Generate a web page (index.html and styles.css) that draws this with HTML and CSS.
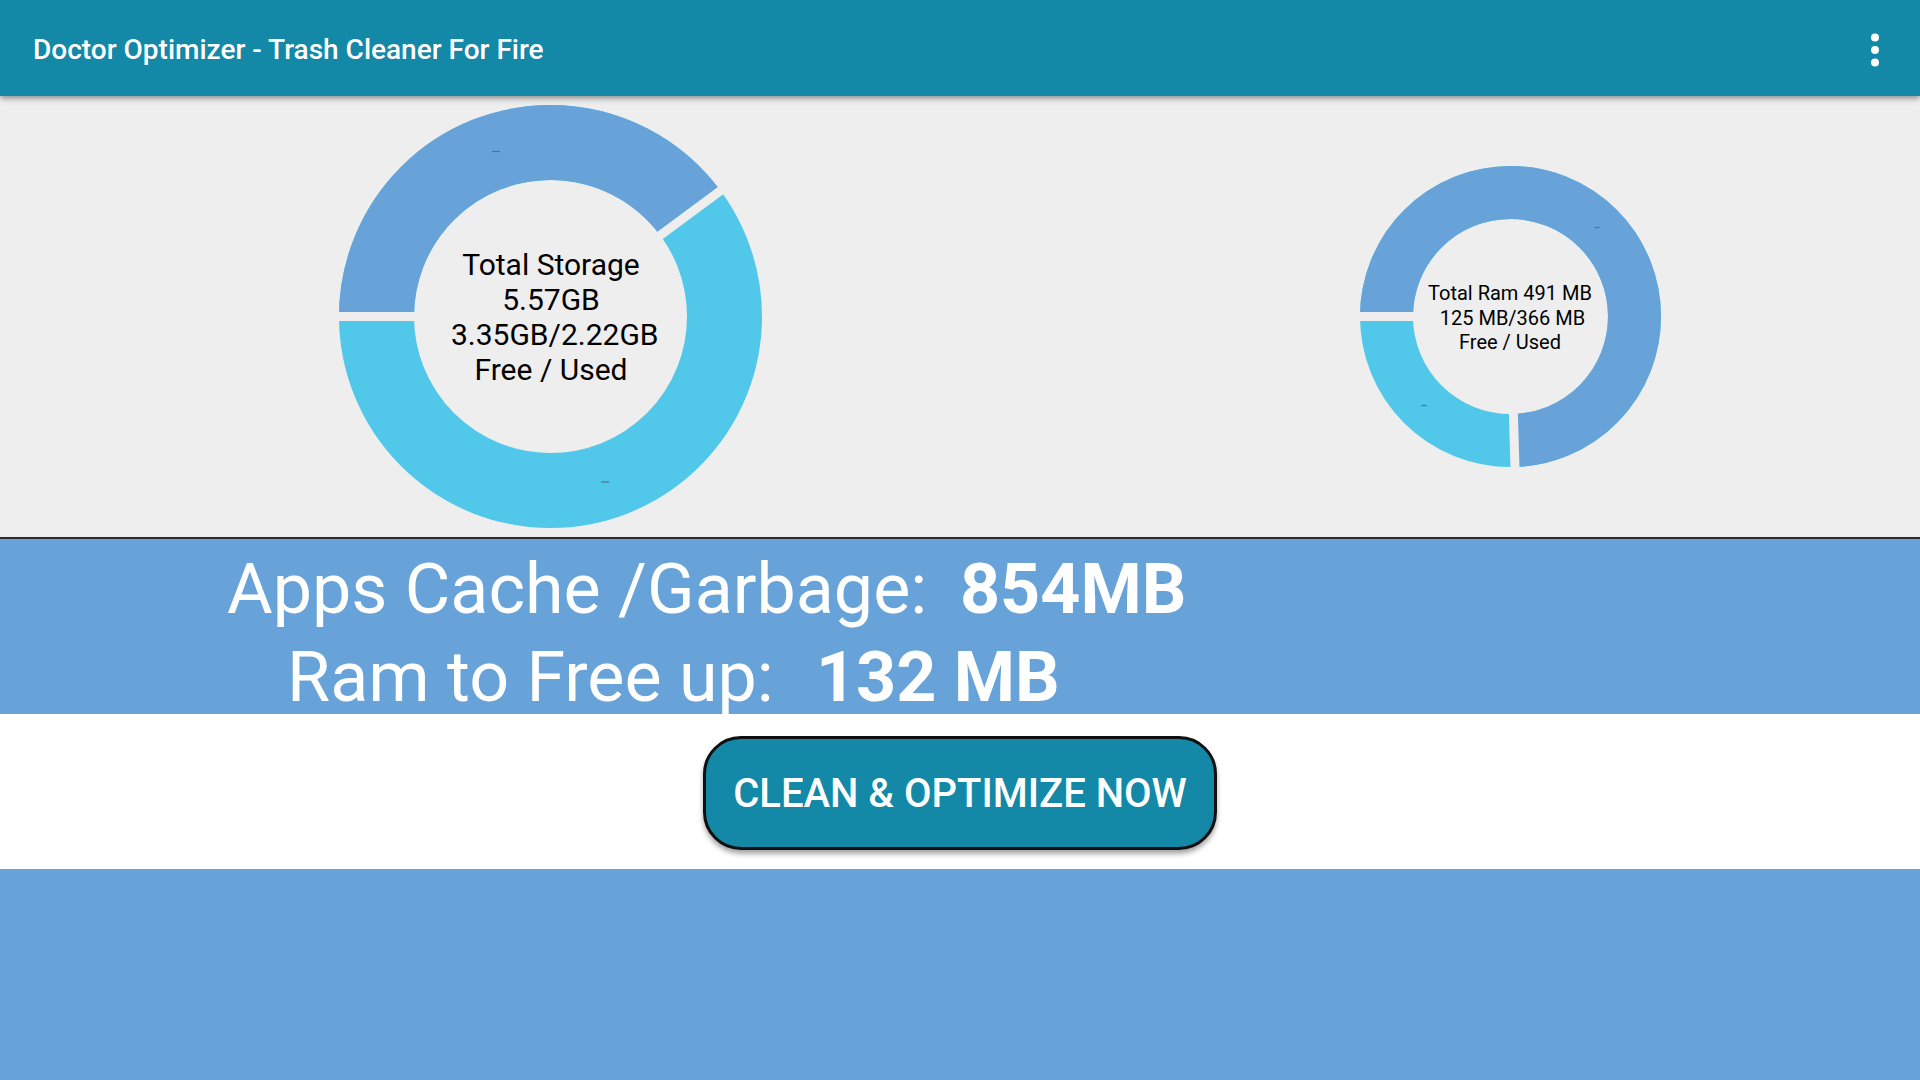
FILE: index.html
```html
<!DOCTYPE html>
<html lang="en">
<head>
<meta charset="utf-8">
<title>Doctor Optimizer - Trash Cleaner For Fire</title>
<link rel="stylesheet" href="styles.css">
</head>
<body>
<div class="app">
  <header class="appbar">
    <h1 class="appbar-title">Doctor Optimizer - Trash Cleaner For Fire</h1>
    <svg class="overflow" width="12" height="36" viewBox="0 0 12 36">
      <circle cx="6" cy="5.5" r="4" fill="#fff"/>
      <circle cx="6" cy="18" r="4" fill="#fff"/>
      <circle cx="6" cy="30.5" r="4" fill="#fff"/>
    </svg>
  </header>

  <section class="charts">
    <div class="chart-cell">
      <div class="donut donut-storage">
        <svg class="donut-svg" width="423" height="423" viewBox="0 0 423 423">
          <circle cx="211.5" cy="211.5" r="174" fill="none" stroke="#51C7EA" stroke-width="75"/>
          <circle cx="211.5" cy="211.5" r="174" fill="none" stroke="#67A3D8" stroke-width="75"
                  stroke-dasharray="435.8 1093.3" transform="rotate(180 211.5 211.5)"/>
          <line x1="211.5" y1="211.5" x2="-4" y2="211.5" stroke="#EEEEEE" stroke-width="9"/>
          <line x1="211.5" y1="211.5" x2="384.3" y2="83.6" stroke="#EEEEEE" stroke-width="9"/>
          <line x1="153" y1="46.5" x2="161" y2="46.5" stroke="#58708a" stroke-width="1.2"/>
          <line x1="262" y1="377" x2="270" y2="377" stroke="#58708a" stroke-width="1.2"/>
        </svg>
        <div class="donut-label label-storage">Total Storage
5.57GB
 3.35GB/2.22GB
Free / Used</div>
      </div>
    </div>
    <div class="chart-cell">
      <div class="donut donut-ram">
        <svg class="donut-svg" width="301" height="301" viewBox="0 0 301 301">
          <circle cx="150.5" cy="150.5" r="124" fill="none" stroke="#51C7EA" stroke-width="53"/>
          <circle cx="150.5" cy="150.5" r="124" fill="none" stroke="#67A3D8" stroke-width="53"
                  stroke-dasharray="580.75 779.2" transform="rotate(180 150.5 150.5)"/>
          <line x1="150.5" y1="150.5" x2="-4" y2="150.5" stroke="#EEEEEE" stroke-width="9"/>
          <line x1="150.5" y1="150.5" x2="155.1" y2="305.4" stroke="#EEEEEE" stroke-width="9"/>
          <line x1="234.5" y1="61.5" x2="239.5" y2="61.5" stroke="#58708a" stroke-width="1.2"/>
          <line x1="61.5" y1="239.5" x2="66.5" y2="239.5" stroke="#58708a" stroke-width="1.2"/>
        </svg>
        <div class="donut-label label-ram">Total Ram 491 MB
 125 MB/366 MB
Free / Used</div>
      </div>
    </div>
  </section>

  <section class="summary">
    <div class="summary-line line-cache">Apps Cache /Garbage:  <b class="summary-value value-cache">854MB</b></div>
    <div class="summary-line line-ram">Ram to Free up:   <b class="summary-value value-ram">132 MB</b></div>
  </section>

  <section class="action">
    <button class="clean-btn" type="button">CLEAN &amp; OPTIMIZE NOW</button>
  </section>

  <section class="footer-fill"></section>
</div>
</body>
</html>
```

FILE: styles.css
```css
* {
  box-sizing: border-box;
}

html, body {
  margin: 0;
  padding: 0;
}

body {
  width: 1920px;
  height: 1080px;
  overflow: hidden;
  font-family: Roboto, "Liberation Sans", sans-serif;
  background: #67A3D8;
}

.app {
  display: flex;
  flex-direction: column;
  width: 1920px;
  height: 1080px;
}

.appbar {
  position: relative;
  z-index: 2;
  flex: 0 0 96px;
  display: flex;
  align-items: center;
  justify-content: space-between;
  padding: 0 39px 0 33px;
  background: #1388A7;
  box-shadow: 0 2px 6px rgba(0, 0, 0, 0.45);
}

.appbar-title {
  margin: 0;
  padding-top: 2px;
  color: #ffffff;
  font-size: 28px;
  font-weight: 500;
  letter-spacing: 0;
}

.overflow {
  display: block;
  margin-top: 3px;
}

.charts {
  flex: 0 0 443px;
  min-height: 0;
  display: grid;
  grid-template-columns: 1100px 820px;
  align-items: center;
  background: #EEEEEE;
  border-bottom: 2px solid #2b2b2b;
}

.chart-cell {
  display: flex;
  justify-content: center;
  align-items: center;
}

.donut {
  display: grid;
  place-items: center;
}

.donut > * {
  grid-area: 1 / 1;
}

.donut-svg {
  display: block;
}

.donut-label {
  color: #000000;
  text-align: center;
  white-space: pre;
  font-weight: 400;
}

.label-storage {
  font-size: 30px;
  line-height: 35px;
  padding-left: 2px;
}

.label-ram {
  font-size: 20px;
  line-height: 24.5px;
  padding-top: 3px;
}

.summary {
  flex: 0 0 175px;
  min-height: 0;
  height: 175px;
  padding-top: 6px;
  background: #67A3D8;
  color: #ffffff;
}

.summary-line {
  font-size: 70px;
  line-height: 88px;
  white-space: pre;
  font-weight: 400;
}

.line-cache {
  padding-left: 227px;
}

.line-ram {
  padding-left: 287px;
}

.summary-value {
  font-weight: 700;
}

.value-cache {
  margin-left: -2px;
}

.value-ram {
  margin-left: -10px;
}

.action {
  flex: 0 0 155px;
  min-height: 0;
  display: flex;
  justify-content: center;
  align-items: flex-start;
  padding-top: 22px;
  background: #ffffff;
}

.clean-btn {
  width: 514px;
  height: 114px;
  padding: 0;
  border: 3px solid #101010;
  border-radius: 38px;
  background: #1388A7;
  color: #ffffff;
  font-family: Roboto, "Liberation Sans", sans-serif;
  font-size: 40px;
  font-weight: 500;
  box-shadow: 0 4px 5px rgba(0, 0, 0, 0.35);
}

.footer-fill {
  flex: 1 1 auto;
  background: #67A3D8;
}
```
